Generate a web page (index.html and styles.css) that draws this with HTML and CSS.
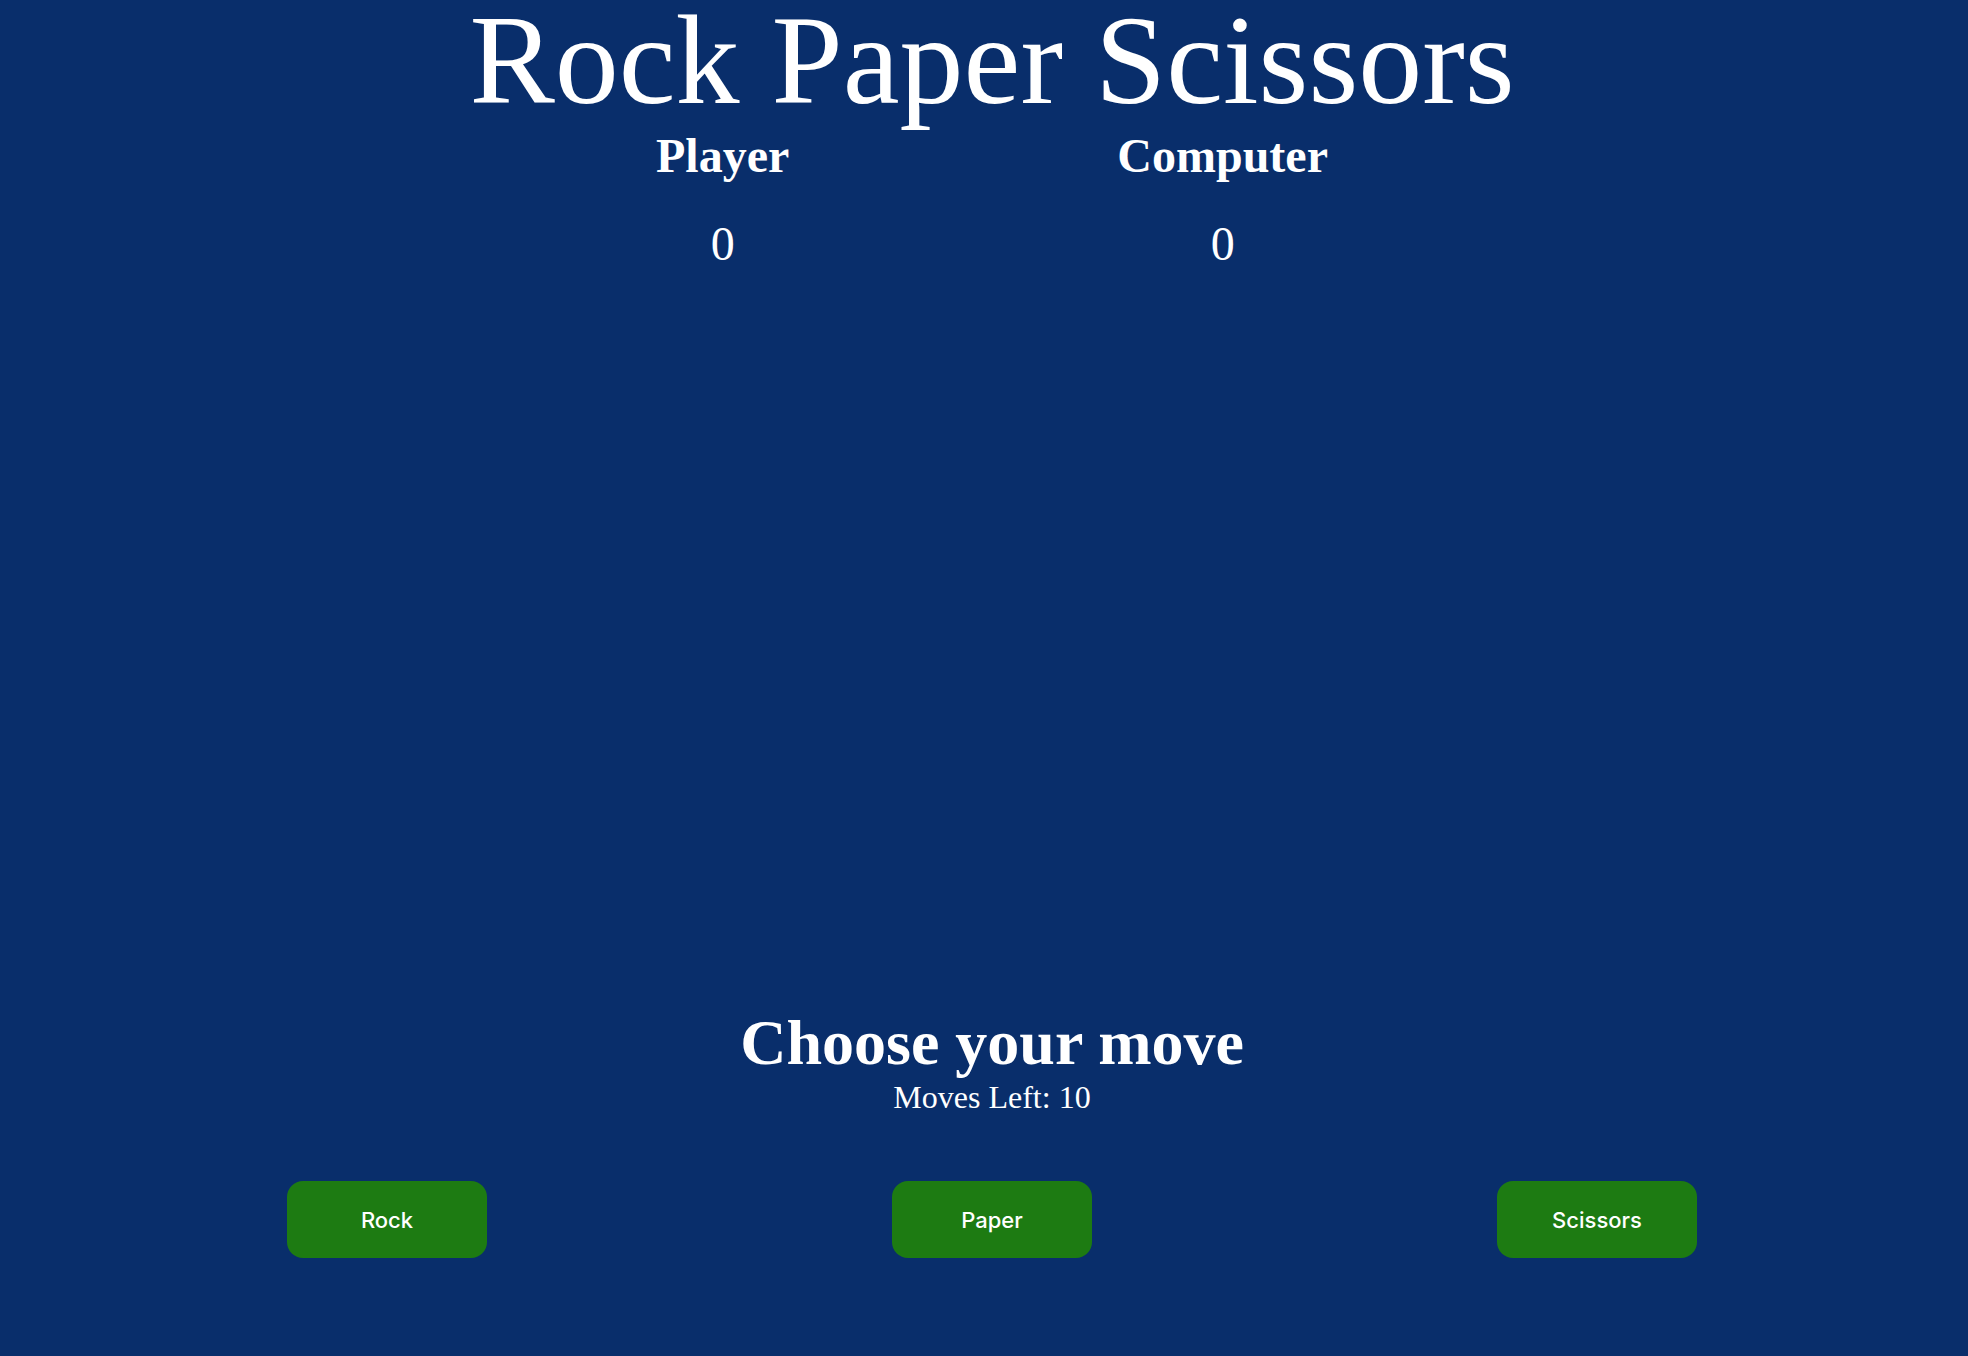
FILE: index.html
```html
<!DOCTYPE html>
<html lang="en">
<head>
  <meta charset="UTF-8">
  <title>Rock Paper Scissors</title>
  <link rel="stylesheet" href="styles.css">
</head>
<body>
  <h1 class="titulo">Rock Paper Scissors</h1>

  <div class="placar">
    <div class="lado">
      <h2>Player</h2>
      <div class="pontos" id="pontosPlayer">0</div>
    </div>
    <div class="lado">
      <h2>Computer</h2>
      <div class="pontos" id="pontosComputer">0</div>
    </div>
  </div>

  <div class="arena" id="arena"></div>

  <div class="escolha">
    <h2 class="chamada" id="chamada">Choose your move</h2>
    <div class="restantes">Moves Left: <span id="restantes">10</span></div>
  </div>

  <div class="botoes">
    <button class="jogada" data-move="rock">Rock</button>
    <button class="jogada" data-move="paper">Paper</button>
    <button class="jogada" data-move="scissors">Scissors</button>
  </div>
</body>
</html>
```

FILE: styles.css
```css
body {
  font-family: 'Liberation Serif', 'Times New Roman', serif;
  background: #092e6b;
  color: white;
  margin: 0;
  padding: 0 0 0 16px;
  text-align: center;
}

.titulo {
  font-size: 128px;
  font-weight: normal;
  line-height: 120px;
  margin: 0 0 8px;
}

.placar {
  display: flex;
  justify-content: center;
  gap: 328px;
}

.lado h2 {
  font-size: 48px;
  line-height: 56px;
  margin: 0 0 32px;
}

.pontos {
  font-size: 48px;
  line-height: 56px;
}

.arena {
  height: 735px;
}

.chamada {
  font-size: 64px;
  line-height: 72px;
  margin: 0;
}

.restantes {
  font-size: 32px;
  line-height: 36px;
}

.botoes {
  display: flex;
  justify-content: center;
  gap: 405px;
  margin-top: 66px;
}

.jogada {
  width: 200px;
  height: 77px;
  font-family: 'Inter', 'Liberation Sans', sans-serif;
  font-size: 22px;
  font-weight: 500;
  color: white;
  background-color: #1d7b12;
  border: none;
  border-radius: 16px;
  cursor: pointer;
}

.jogada:hover {
  background-color: #176a0e;
}
```
